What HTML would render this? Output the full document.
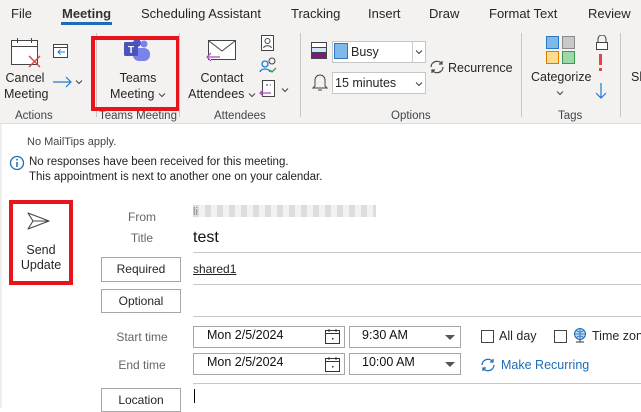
<!DOCTYPE html>
<html><head><meta charset="utf-8"><style>
*{margin:0;padding:0;box-sizing:border-box}
body{width:641px;height:408px;overflow:hidden;background:#fff;font-family:"Liberation Sans",sans-serif;color:#262626;position:relative;font-size:12px}
.a{position:absolute;white-space:nowrap}
.tab{position:absolute;top:6px;font-size:13px;color:#262626}
.gl{position:absolute;top:110px;font-size:11.5px;color:#444}
.sep{position:absolute;top:33px;width:1px;height:84px;background:#c8c6c4}
.btn{position:absolute;left:101px;width:80px;border:1px solid #a6a6a6;background:#fff;text-align:center;font-size:12px;color:#262626}
.lab{position:absolute;width:60px;left:112px;text-align:center;color:#666;font-size:12px}
.hl{position:absolute;left:193px;right:0;height:1px;background:#c8c8c8}
.box{position:absolute;border:1px solid #a6a6a6;height:22px;font-size:12.5px;color:#111}
.chev{display:inline-block;vertical-align:middle}
</style></head><body>
<div class="a" style="left:0;top:0;width:641px;height:124px;background:#f3f2f1;border-bottom:1px solid #dcdcdc"></div>
<div class="tab" style="left:11px">File</div>
<div class="tab" style="left:62px;font-weight:bold;color:#333">Meeting</div>
<div class="a" style="left:61px;top:22px;width:51px;height:3px;background:#1e6bb8"></div>
<div class="tab" style="left:141px">Scheduling Assistant</div>
<div class="tab" style="left:291px">Tracking</div>
<div class="tab" style="left:368px">Insert</div>
<div class="tab" style="left:429px">Draw</div>
<div class="tab" style="left:489px">Format Text</div>
<div class="tab" style="left:588px">Review</div>

<!-- Actions -->
<svg class="a" style="left:10px;top:36px" width="32" height="32"><rect x="1.5" y="4.5" width="26" height="24" fill="#fff" stroke="#444"/><line x1="1" y1="10.5" x2="28" y2="10.5" stroke="#444"/><line x1="7.5" y1="2" x2="7.5" y2="7" stroke="#444"/><line x1="21.5" y1="2" x2="21.5" y2="7" stroke="#444"/><path d="M19 20l11 11M30 20l-11 11" stroke="#e03c3c" stroke-width="1.3"/></svg>
<div class="a" style="left:4px;top:70px;text-align:center;width:42px;font-size:12.5px;line-height:16px">Cancel<br>Meeting</div>
<svg class="a" style="left:52px;top:42px" width="18" height="18"><rect x="1.5" y="2.5" width="14" height="13" fill="#fff" stroke="#444"/><line x1="1" y1="5.5" x2="16" y2="5.5" stroke="#444"/><path d="M13 10H6M8.5 7.5L6 10l2.5 2.5" stroke="#1e7ad4" fill="none"/></svg>
<svg class="a" style="left:52px;top:75px" width="22" height="14"><path d="M1 7h18M14 2l5 5-5 5" stroke="#1e7ad4" fill="none" stroke-width="1.2"/></svg>
<svg class="a" style="left:75px;top:79px" width="8" height="6"><path d="M1 1.5l3 3 3-3" fill="none" stroke="#444"/></svg>
<div class="gl" style="left:15px">Actions</div>
<div class="sep" style="left:96px"></div>

<!-- Teams -->
<svg class="a" style="left:123px;top:39px" width="30" height="24"><circle cx="21" cy="5" r="3.5" fill="#7b83eb"/><circle cx="14" cy="4" r="4" fill="#5059c9"/><rect x="10" y="9" width="17" height="13" rx="6" fill="#7b83eb"/><rect x="1" y="3" width="14" height="14" rx="1.5" fill="#4b53bc"/><text x="8" y="14" font-size="10" font-weight="bold" fill="#fff" text-anchor="middle" font-family="Liberation Sans">T</text></svg>
<div class="a" style="left:100px;top:70px;width:76px;text-align:center;font-size:12.5px;line-height:16px">Teams<br>Meeting <svg class="chev" width="8" height="6"><path d="M1 1.5l3 3 3-3" fill="none" stroke="#444"/></svg></div>
<div class="gl" style="left:97px;width:82px;text-align:center">Teams Meeting</div>
<div class="a" style="left:91px;top:36px;width:89px;height:75px;border:4px solid #e8141c"></div>
<div class="sep" style="left:179px"></div>

<!-- Attendees -->
<svg class="a" style="left:206px;top:39px" width="32" height="24"><rect x="2.5" y="1.5" width="27" height="19" fill="#fff" stroke="#444"/><path d="M3 2l13 10 13-10" stroke="#444" fill="none"/><path d="M14 18H1M5 14l-4 4 4 4" stroke="#b146c2" fill="#fff" stroke-width="1.2"/></svg>
<div class="a" style="left:188px;top:70px;width:68px;text-align:center;font-size:12.5px;line-height:16px">Contact<br>Attendees <svg class="chev" width="8" height="6"><path d="M1 1.5l3 3 3-3" fill="none" stroke="#444"/></svg></div>
<svg class="a" style="left:260px;top:34px" width="16" height="20"><rect x="1.5" y="1.5" width="12" height="15" fill="#fff" stroke="#444"/><circle cx="7.5" cy="7" r="2.5" fill="none" stroke="#444"/><path d="M3.5 14c1-3 7-3 8 0" stroke="#444" fill="none"/></svg>
<svg class="a" style="left:259px;top:57px" width="20" height="18"><circle cx="6" cy="7" r="3" fill="none" stroke="#1e7ad4" stroke-width="1.3"/><path d="M1 15c1-4 9-4 10 0" stroke="#1e7ad4" fill="none" stroke-width="1.3"/><circle cx="13" cy="4" r="3" fill="none" stroke="#444"/><path d="M11 13l2 2 4-4" stroke="#2f9e44" fill="none" stroke-width="1.3"/></svg>
<svg class="a" style="left:259px;top:79px" width="18" height="20"><rect x="3.5" y="1.5" width="12" height="16" fill="#fff" stroke="#444"/><path d="M7 6h2M11 6h1" stroke="#444"/><path d="M12 14H1M4 11l-3 3 3 3" stroke="#b146c2" fill="none" stroke-width="1.2"/></svg>
<svg class="a" style="left:281px;top:87px" width="8" height="6"><path d="M1 1.5l3 3 3-3" fill="none" stroke="#444"/></svg>
<div class="gl" style="left:214px">Attendees</div>
<div class="sep" style="left:300px"></div>

<!-- Options -->
<svg class="a" style="left:311px;top:42px" width="17" height="18"><rect x="0.5" y="0.5" width="15" height="5" fill="#fff" stroke="#444"/><rect x="0.5" y="5.5" width="15" height="5" fill="#cfe4f7" stroke="#444"/><rect x="0.5" y="10.5" width="15" height="6" fill="#7a1a7a" stroke="#444"/></svg>
<div class="a" style="left:332px;top:41px;width:94px;height:22px;border:1px solid #c6c6c6;background:#fff"></div>
<div class="a" style="left:334px;top:43px;width:14px;height:16px;background:#7fb8ea;border:1px solid #2a78c2"></div>
<div class="a" style="left:351px;top:45px;font-size:12.5px">Busy</div>
<div class="a" style="left:412px;top:42px;width:1px;height:20px;background:#ccc"></div>
<svg class="a" style="left:415px;top:49px" width="8" height="6"><path d="M1 1.5l3 3 3-3" fill="none" stroke="#444"/></svg>
<svg class="a" style="left:312px;top:72px" width="16" height="20"><path d="M3 14V8a5 5 0 0 1 10 0v6l2 2H1z" fill="none" stroke="#444"/><path d="M6 18h4" stroke="#444"/></svg>
<div class="a" style="left:332px;top:72px;width:94px;height:22px;border:1px solid #c6c6c6;background:#fff"></div>
<div class="a" style="left:335px;top:76px;font-size:12.5px">15 minutes</div>
<svg class="a" style="left:415px;top:81px" width="8" height="6"><path d="M1 1.5l3 3 3-3" fill="none" stroke="#444"/></svg>
<svg class="a" style="left:429px;top:59px" width="16" height="16"><path d="M2 8a6 6 0 0 1 11-3M14 8a6 6 0 0 1-11 3" fill="none" stroke="#444" stroke-width="1.2"/><path d="M13 2v3h-3M3 14v-3h3" fill="none" stroke="#444" stroke-width="1.2"/></svg>
<div class="a" style="left:448px;top:61px;font-size:12.5px">Recurrence</div>
<div class="gl" style="left:391px">Options</div>
<div class="sep" style="left:521px"></div>

<!-- Tags -->
<div class="a" style="left:546px;top:36px;width:13px;height:13px;background:#7fb8ea;border:1px solid #2a78c2"></div>
<div class="a" style="left:562px;top:36px;width:13px;height:13px;background:#c8c8c8;border:1px solid #8a8a8a"></div>
<div class="a" style="left:546px;top:51px;width:13px;height:13px;background:#f8dc90;border:1px solid #e07b00"></div>
<div class="a" style="left:562px;top:51px;width:13px;height:13px;background:#9dd9a7;border:1px solid #3c9a4c"></div>
<div class="a" style="left:531px;top:70px;font-size:12.5px">Categorize</div>
<svg class="a" style="left:556px;top:90px" width="8" height="6"><path d="M1 1.5l3 3 3-3" fill="none" stroke="#444"/></svg>
<svg class="a" style="left:595px;top:35px" width="14" height="16"><path d="M3 7V4a4 4 0 0 1 8 0v3" fill="none" stroke="#444"/><rect x="1.5" y="7.5" width="11" height="7" fill="#fff" stroke="#444"/></svg>
<div class="a" style="left:599px;top:54px;width:3px;height:11px;background:#e8414a"></div>
<div class="a" style="left:599px;top:68px;width:3px;height:3px;background:#e8414a"></div>
<svg class="a" style="left:594px;top:82px" width="14" height="18"><path d="M7 1v15M2 11l5 5 5-5" fill="none" stroke="#1e7ad4" stroke-width="1.2"/></svg>
<div class="gl" style="left:558px">Tags</div>
<div class="sep" style="left:620px"></div>
<div class="a" style="left:631px;top:70px;font-size:12.5px">Sh</div>

<!-- Body -->
<div class="a" style="left:27px;top:136px;font-size:11px;color:#444">No MailTips apply.</div>
<svg class="a" style="left:9px;top:155px" width="16" height="16"><circle cx="8" cy="8" r="6.5" fill="none" stroke="#1e6bb8" stroke-width="1.3"/><path d="M8 7v5" stroke="#1e6bb8" stroke-width="1.5"/><circle cx="8" cy="4.7" r="0.9" fill="#1e6bb8"/></svg>
<div class="a" style="left:29px;top:155px;font-size:11.5px;line-height:14.5px;color:#222">No responses have been received for this meeting.<br>This appointment is next to another one on your calendar.</div>

<div class="a" style="left:9px;top:200px;width:64px;height:85px;border:4px solid #e8141c"></div>
<svg class="a" style="left:27px;top:212px" width="24" height="18"><path d="M1 1l21 8-21 8 5-8z M6 9h16" fill="none" stroke="#444" stroke-width="1.1" stroke-linejoin="round"/></svg>
<div class="a" style="left:13px;top:243px;width:56px;text-align:center;font-size:12.5px;line-height:15px">Send<br>Update</div>

<div class="lab" style="top:210px">From</div>
<div class="a" style="left:193px;top:205px;width:183px;height:12px;background:repeating-linear-gradient(90deg,#ddd 0 6px,#f2f2f2 6px 12px)"></div>
<div class="a" style="left:193px;top:206px;font-size:11px;color:#888">li</div>
<div class="lab" style="top:231px">Title</div>
<div class="a" style="left:193px;top:229px;font-size:16px;color:#111">test</div>
<div class="hl" style="top:252px"></div>
<div class="btn" style="top:257px;height:25px;line-height:23px">Required</div>
<div class="a" style="left:193px;top:262px;font-size:12px;text-decoration:underline;color:#222">shared1</div>
<div class="hl" style="top:284px"></div>
<div class="btn" style="top:289px;height:24px;line-height:22px">Optional</div>
<div class="hl" style="top:316px"></div>

<div class="lab" style="top:330px">Start time</div>
<div class="box" style="left:193px;top:326px;width:152px"><span class="a" style="left:13px;top:1px">Mon 2/5/2024</span></div>
<svg class="a" style="left:324px;top:328px" width="18" height="18"><rect x="1.5" y="2.5" width="14" height="13" fill="#fff" stroke="#333"/><line x1="1" y1="5.5" x2="16" y2="5.5" stroke="#333"/><line x1="5" y1="1" x2="5" y2="4" stroke="#333"/><line x1="12" y1="1" x2="12" y2="4" stroke="#333"/><rect x="8" y="10" width="1.5" height="1.5" fill="#333"/></svg>
<div class="box" style="left:349px;top:326px;width:112px"><span class="a" style="left:12px;top:1px">9:30 AM</span><span class="a" style="left:95px;top:8px;width:0;height:0;border-left:5px solid transparent;border-right:5px solid transparent;border-top:5px solid #555"></span></div>
<div class="a" style="left:481px;top:330px;width:13px;height:13px;border:1px solid #444;background:#fff"></div>
<div class="a" style="left:499px;top:329px;font-size:12.5px">All day</div>
<div class="a" style="left:554px;top:330px;width:13px;height:13px;border:1px solid #444;background:#fff"></div>
<svg class="a" style="left:572px;top:327px" width="16" height="18"><circle cx="8" cy="7" r="5.5" fill="#bcd9f2" stroke="#1e6bb8"/><path d="M2.5 7h11M8 1.5v11M4.5 3.5c2 2 5 2 7 0M4.5 10.5c2-2 5-2 7 0" fill="none" stroke="#1e6bb8" stroke-width="0.8"/><path d="M4 15h8M8 13v2" stroke="#333"/></svg>
<div class="a" style="left:592px;top:329px;font-size:12.5px">Time zones</div>

<div class="lab" style="top:358px">End time</div>
<div class="box" style="left:193px;top:353px;width:152px"><span class="a" style="left:13px;top:1px">Mon 2/5/2024</span></div>
<svg class="a" style="left:324px;top:356px" width="18" height="18"><rect x="1.5" y="2.5" width="14" height="13" fill="#fff" stroke="#333"/><line x1="1" y1="5.5" x2="16" y2="5.5" stroke="#333"/><line x1="5" y1="1" x2="5" y2="4" stroke="#333"/><line x1="12" y1="1" x2="12" y2="4" stroke="#333"/><rect x="8" y="10" width="1.5" height="1.5" fill="#333"/></svg>
<div class="box" style="left:349px;top:353px;width:112px"><span class="a" style="left:12px;top:1px">10:00 AM</span><span class="a" style="left:95px;top:8px;width:0;height:0;border-left:5px solid transparent;border-right:5px solid transparent;border-top:5px solid #555"></span></div>
<svg class="a" style="left:480px;top:357px" width="16" height="16"><path d="M2 8a6 6 0 0 1 11-3M14 8a6 6 0 0 1-11 3" fill="none" stroke="#1e6bb8" stroke-width="1.3"/><path d="M13 2v3h-3M3 14v-3h3" fill="none" stroke="#1e6bb8" stroke-width="1.3"/></svg>
<div class="a" style="left:501px;top:358px;font-size:12.5px;color:#1e6bb8">Make Recurring</div>
<div class="hl" style="top:383px"></div>
<div class="btn" style="top:388px;height:24px;line-height:22px">Location</div>
<div class="a" style="left:194px;top:389px;width:1px;height:14px;background:#000"></div>
<div class="a" style="left:0;top:124px;width:2px;height:284px;background:#eee"></div>
</body></html>
